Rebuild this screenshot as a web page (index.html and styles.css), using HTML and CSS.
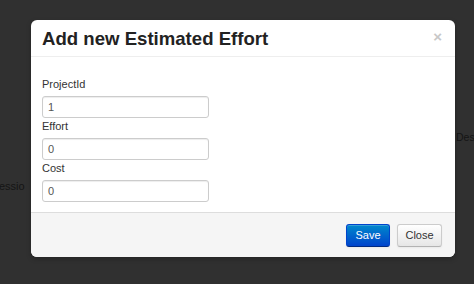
FILE: index.html
```html
<!DOCTYPE html>
<html>
<head>
<meta charset="utf-8">
<link rel="stylesheet" href="styles.css">
</head>
<body>
<div class="page">
  <span class="bg-text bg-left">essio</span>
  <span class="bg-text bg-right">Des</span>
</div>
<div class="modal">
  <div class="modal-header">
    <h3 class="title">Add new Estimated Effort</h3>
    <span class="close">×</span>
  </div>
  <div class="modal-body">
    <label class="lbl">ProjectId</label>
    <div class="input">1</div>
    <label class="lbl">Effort</label>
    <div class="input">0</div>
    <label class="lbl">Cost</label>
    <div class="input">0</div>
  </div>
  <div class="modal-footer">
    <button class="btn btn-primary">Save</button>
    <button class="btn btn-close">Close</button>
  </div>
</div>
</body>
</html>
```
FILE: styles.css
```css
html, body {
  margin: 0;
  padding: 0;
  width: 474px;
  height: 284px;
  overflow: hidden;
  background: #303030;
  font-family: "Liberation Sans", Arial, sans-serif;
}
.page {
  position: relative;
  width: 474px;
  height: 284px;
}
.bg-text {
  position: absolute;
  font-size: 11px;
  color: #151515;
}
.bg-left {
  left: -1px;
  top: 180px;
}
.bg-right {
  left: 456px;
  top: 131px;
  font-size: 10.5px;
  white-space: nowrap;
}
.modal {
  position: absolute;
  left: 31px;
  top: 20px;
  width: 424px;
  height: 237px;
  background: #fff;
  border-radius: 6px;
  box-shadow: 0 2px 5px rgba(0,0,0,0.25);
  display: flex;
  flex-direction: column;
  overflow: hidden;
}
.modal-header {
  height: 37px;
  border-bottom: 1px solid #eee;
  display: flex;
  align-items: center;
  justify-content: space-between;
  padding: 0 13px 0 11px;
  box-sizing: border-box;
}
.title {
  margin: 0;
  font-size: 18.6px;
  font-weight: bold;
  color: #222;
  line-height: 22px;
  margin-top: 2px;
}
.close {
  color: #c8c8c8;
  font-size: 15px;
  font-weight: bold;
  line-height: 15px;
  align-self: flex-start;
  margin-top: 9px;
}
.modal-body {
  flex: 1;
  padding: 20px 11px 0;
  display: flex;
  flex-direction: column;
  align-items: flex-start;
}
.lbl {
  font-size: 11px;
  color: #333;
  line-height: 14px;
  height: 14px;
  margin-bottom: 5px;
}
.input {
  box-sizing: border-box;
  width: 167px;
  height: 22px;
  border: 1px solid #ccc;
  border-radius: 3px;
  box-shadow: inset 0 1px 1px rgba(0,0,0,0.075);
  font-size: 11px;
  color: #555;
  line-height: 20px;
  padding: 0 5px;
  margin-bottom: 1px;
}
.modal-footer {
  height: 45px;
  background: #f5f5f5;
  border-top: 1px solid #ddd;
  display: flex;
  align-items: center;
  justify-content: flex-end;
  gap: 7px;
  padding: 0 13px;
  box-sizing: border-box;
}
.btn {
  height: 23px;
  box-sizing: border-box;
  padding: 0;
  font-family: "Liberation Sans", Arial, sans-serif;
  font-size: 11px;
  color: #333;
  border: 1px solid #ccc;
  border-bottom-color: #b3b3b3;
  border-radius: 3px;
  background: linear-gradient(#ffffff, #e6e6e6);
  box-shadow: inset 0 1px 0 rgba(255,255,255,0.2), 0 1px 2px rgba(0,0,0,0.05);
}
.btn-close {
  width: 45px;
}
.btn-primary {
  width: 44px;
  color: #fff;
  border-color: #0044cc #0044cc #002a80;
  background: linear-gradient(#0088cc, #0044cc);
}
```
